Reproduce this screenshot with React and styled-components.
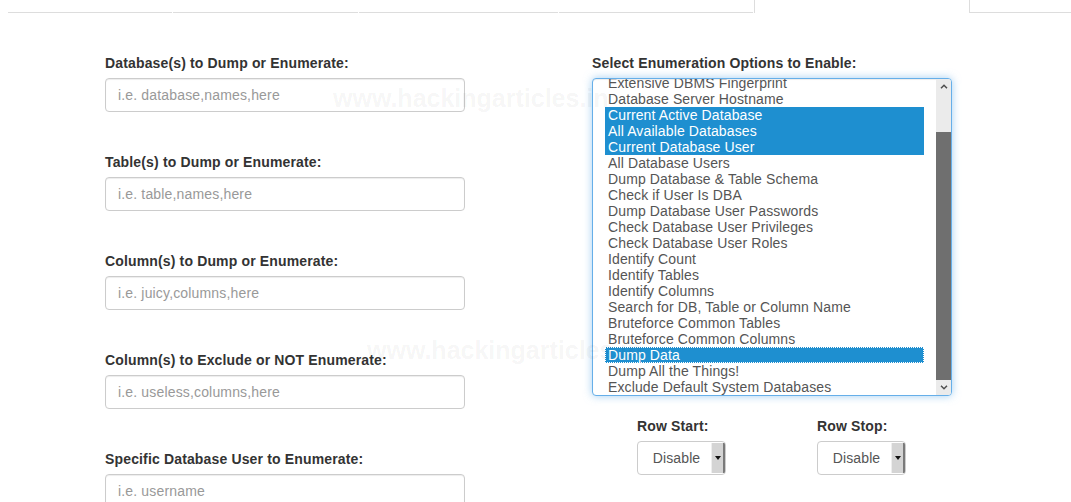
import React, { useLayoutEffect, useRef } from "react";
import styled, { createGlobalStyle } from "styled-components";

const Global = createGlobalStyle`
  html, body { margin: 0; padding: 0; overflow: hidden; background: #fff; }
  body { font-family: "Liberation Sans", Arial, sans-serif; font-size: 14px; color: #333; }
  * { box-sizing: border-box; }
`;

const Page = styled.div`
  position: relative;
  width: 1071px;
  height: 502px;
  overflow: hidden;
`;

const TabBar = styled.div`
  display: flex;
  gap: 1px;
  padding-left: 8px;
  height: 13px;
`;

const Tab = styled.div`
  height: 13px;
  border-bottom: 1px solid #ddd;
  flex: ${(p) => (p.$w ? `0 0 ${p.$w}px` : "1 1 auto")};
`;

const ActiveTab = styled.div`
  flex: 0 0 216px;
  height: 13px;
  border-left: 1px solid #ddd;
  border-right: 1px solid #ddd;
  margin-right: -1px;
`;

const Form = styled.div`
  display: grid;
  grid-template-columns: 360px 360px;
  column-gap: 127px;
  padding: 40px 0 0 105px;
`;

const Column = styled.div`
  display: flex;
  flex-direction: column;
`;

const Group = styled.div`
  display: flex;
  flex-direction: column;
  margin-bottom: ${(p) => p.$mb ?? 40}px;
`;

const Label = styled.label`
  display: block;
  font-weight: bold;
  font-size: 14px;
  letter-spacing: 0.15px;
  line-height: 20px;
  color: #333;
  margin-bottom: 5px;
  white-space: nowrap;
`;

const Input = styled.input`
  width: 360px;
  height: 34px;
  padding: 6px 12px;
  font-family: "Liberation Sans", Arial, sans-serif;
  font-size: 14px;
  letter-spacing: 0.16px;
  color: #555;
  background: #fff;
  border: 1px solid #ccc;
  border-radius: 4px;
  box-shadow: inset 0 1px 1px rgba(0, 0, 0, 0.075);
  outline: none;
  &::placeholder { color: #999; }
`;

const MultiSelect = styled.div`
  position: relative;
  z-index: 1;
  display: flex;
  width: 360px;
  height: 318px;
  border: 1px solid #66afe9;
  border-radius: 4px;
  background: #fff;
  box-shadow: inset 0 1px 1px rgba(0, 0, 0, 0.075), 0 0 8px rgba(102, 175, 233, 0.6);
  overflow: hidden;
`;

const Viewport = styled.div`
  flex: 1;
  overflow: hidden;
  padding: 0 12px;
`;

const OptionList = styled.div`
  padding: 6px 0;
`;

const Option = styled.div`
  height: 16px;
  line-height: 16px;
  padding: 0 3px;
  font-size: 14px;
  letter-spacing: 0.12px;
  white-space: nowrap;
  color: ${(p) => (p.$sel ? "#fff" : "#555")};
  background: ${(p) => (p.$sel ? "#1e8fd0" : "transparent")};
  outline: ${(p) => (p.$focus ? "1px dotted #ffffff" : "none")};
  outline-offset: -1px;
`;

const Scrollbar = styled.div`
  flex: 0 0 15px;
  display: flex;
  flex-direction: column;
  background: #ebebeb;
`;

const ScrollBtn = styled.div`
  height: ${(p) => p.$h}px;
  display: flex;
  align-items: center;
  justify-content: center;
`;

const Track = styled.div`
  flex: 1;
  padding-top: 39px;
  display: flex;
  flex-direction: column;
`;

const Thumb = styled.div`
  height: 248px;
  background: #6f6f6f;
`;

const RowOptions = styled.div`
  display: grid;
  grid-template-columns: 180px 180px;
  margin-top: 20px;
`;

const RowCell = styled.div`
  display: flex;
  padding-left: 45px;
`;

const RowBlock = styled.div`
  width: 89px;
`;

const DropBox = styled.div`
  display: flex;
  width: 89px;
  height: 34px;
  border: 1px solid #ccc;
  border-radius: 4px;
  overflow: hidden;
  background: #fff;
`;

const DropValue = styled.div`
  flex: 1;
  display: flex;
  align-items: center;
  justify-content: center;
  padding-left: 4px;
  color: #555;
  font-size: 14px;
  letter-spacing: 0.12px;
`;

const DropButton = styled.div`
  flex: 0 0 14px;
  margin: 1px 0;
  display: flex;
  align-items: center;
  justify-content: center;
  background: #d4d4d4;
  border-right: 2px solid #7a7a7a;
  border-left: 1px solid #eee;
`;

const Watermark = styled.div`
  position: absolute;
  left: ${(p) => p.$x}px;
  top: ${(p) => p.$y}px;
  z-index: 5;
  pointer-events: none;
  font-family: "Liberation Sans", Arial, sans-serif;
  font-weight: bold;
  font-size: 25px;
  line-height: 25px;
  color: rgba(0, 0, 0, 0.055);
  white-space: nowrap;
`;

const Chevron = ({ up }) => (
  <svg width="8" height="5" viewBox="0 0 8 5">
    <polyline
      points={up ? "1,4.2 4,1.2 7,4.2" : "1,0.8 4,3.8 7,0.8"}
      fill="none"
      stroke="#505050"
      strokeWidth="1.5"
    />
  </svg>
);

const Caret = () => (
  <svg width="6" height="4" viewBox="0 0 6 4">
    <polygon points="0,0 6,0 3,4" fill="#111" />
  </svg>
);

const textFields = [
  ["Database(s) to Dump or Enumerate:", "i.e. database,names,here"],
  ["Table(s) to Dump or Enumerate:", "i.e. table,names,here"],
  ["Column(s) to Dump or Enumerate:", "i.e. juicy,columns,here"],
  ["Column(s) to Exclude or NOT Enumerate:", "i.e. useless,columns,here"],
  ["Specific Database User to Enumerate:", "i.e. username"],
];

const options = [
  ["Retrieve DBMS Banner"],
  ["Current Session User"],
  ["Check DBMS Comments"],
  ["Extensive DBMS Fingerprint"],
  ["Database Server Hostname"],
  ["Current Active Database", true],
  ["All Available Databases", true],
  ["Current Database User", true],
  ["All Database Users"],
  ["Dump Database & Table Schema"],
  ["Check if User Is DBA"],
  ["Dump Database User Passwords"],
  ["Check Database User Privileges"],
  ["Check Database User Roles"],
  ["Identify Count"],
  ["Identify Tables"],
  ["Identify Columns"],
  ["Search for DB, Table or Column Name"],
  ["Bruteforce Common Tables"],
  ["Bruteforce Common Columns"],
  ["Dump Data", true, true],
  ["Dump All the Things!"],
  ["Exclude Default System Databases"],
];

const RowSelect = ({ label }) => (
  <RowCell>
    <RowBlock>
      <Label>{label}</Label>
      <DropBox>
        <DropValue>Disable</DropValue>
        <DropButton>
          <Caret />
        </DropButton>
      </DropBox>
    </RowBlock>
  </RowCell>
);

export default function App() {
  const vp = useRef(null);
  useLayoutEffect(() => {
    if (vp.current) vp.current.scrollTop = 58;
  }, []);

  return (
    <Page>
      <Global />
      <TabBar>
        <Tab $w={164} />
        <Tab $w={185} />
        <Tab $w={199} />
        <Tab $w={194} />
        <ActiveTab />
        <Tab />
      </TabBar>
      <Form>
        <Column>
          {textFields.map(([label, ph]) => (
            <Group key={label}>
              <Label>{label}</Label>
              <Input placeholder={ph} />
            </Group>
          ))}
        </Column>
        <Column>
          <Group $mb={0}>
            <Label>Select Enumeration Options to Enable:</Label>
            <MultiSelect>
              <Viewport ref={vp}>
                <OptionList>
                  {options.map(([t, sel, focus]) => (
                    <Option key={t} $sel={sel} $focus={focus}>
                      {t}
                    </Option>
                  ))}
                </OptionList>
              </Viewport>
              <Scrollbar>
                <ScrollBtn $h={14}>
                  <Chevron up />
                </ScrollBtn>
                <Track>
                  <Thumb />
                </Track>
                <ScrollBtn $h={15}>
                  <Chevron />
                </ScrollBtn>
              </Scrollbar>
            </MultiSelect>
          </Group>
          <RowOptions>
            <RowSelect label="Row Start:" />
            <RowSelect label="Row Stop:" />
          </RowOptions>
        </Column>
      </Form>
      <Watermark $x={333} $y={86}>www.hackingarticles.in</Watermark>
      <Watermark $x={367} $y={338}>www.hackingarticles.in</Watermark>
    </Page>
  );
}
